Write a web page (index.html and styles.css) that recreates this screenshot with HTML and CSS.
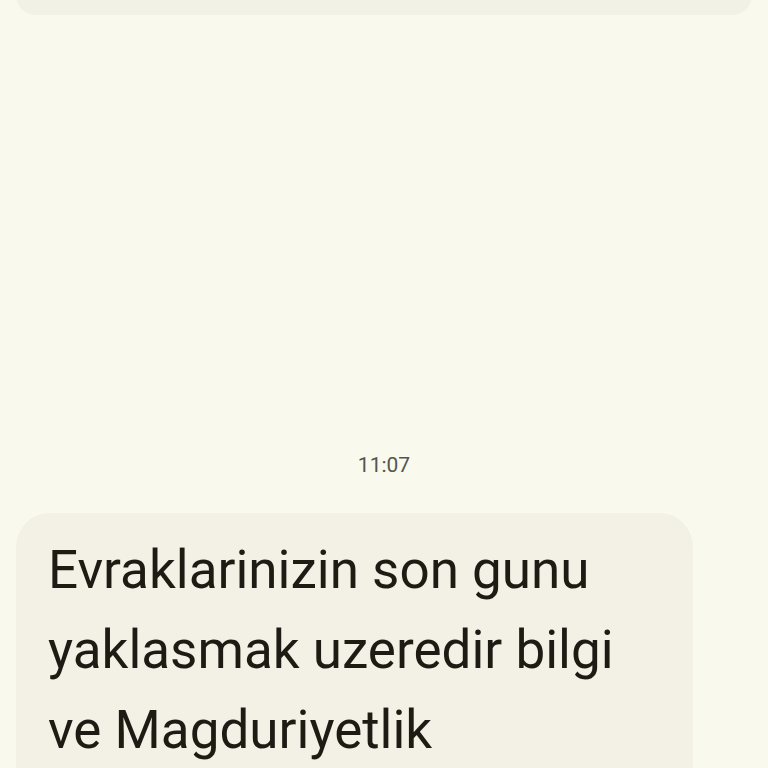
FILE: index.html
```html
<!DOCTYPE html>
<html>
<head>
<meta charset="utf-8">
<link rel="stylesheet" href="styles.css">
</head>
<body>
<div class="screen">
  <div class="prev-card"></div>
  <div class="spacer"></div>
  <div class="time">11:07</div>
  <div class="bubble">
    <p class="msg">Evraklarinizin son gunu<br>yaklasmak uzeredir bilgi<br>ve Magduriyetlik</p>
  </div>
</div>
</body>
</html>
```
FILE: styles.css
```css
html, body {
  margin: 0;
  padding: 0;
  background: #f9f9ee;
}
.screen {
  width: 768px;
  height: 768px;
  overflow: hidden;
  display: flex;
  flex-direction: column;
}
.prev-card {
  margin: -30px 16px 0 16px;
  height: 45px;
  background: #f2f1e6;
  border-radius: 0 0 20px 20px;
  flex: none;
}
.spacer {
  height: 437px;
  flex: none;
}
.time {
  text-align: center;
  font-family: "Roboto", sans-serif;
  font-size: 21px;
  color: #55554f;
  line-height: 26px;
  flex: none;
}
.bubble {
  margin: 35px 0 0 16px;
  width: 677px;
  height: 400px;
  background: #f3f0e5;
  border-radius: 34px 34px 0 0;
  padding: 17px 0 0 32px;
  box-sizing: border-box;
  flex: none;
}
.msg {
  margin: 0;
  font-family: "Roboto", sans-serif;
  font-size: 53px;
  line-height: 80px;
  color: #1d1b14;
}
```
